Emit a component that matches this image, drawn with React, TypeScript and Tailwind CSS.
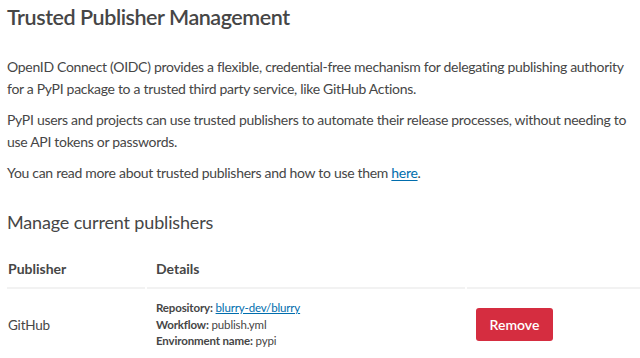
import React from "react";

export default function App() {
  return (
    <div
      className="w-[640px] h-[358px] overflow-hidden bg-white text-[#464646] pl-[7px]"
      style={{ fontFamily: "Lato, 'Noto Sans', sans-serif" }}
    >
      <h1 className="text-[21.5px] font-semibold leading-[30px] pt-[2px] tracking-[-0.45px] text-[#464646]">
        Trusted Publisher Management
      </h1>
      <div className="text-[14px] tracking-[-0.3px] leading-[22px] whitespace-nowrap">
        <p className="mt-[24px]">
          OpenID Connect (OIDC) provides a flexible, credential-free mechanism for delegating publishing authority
          <br />
          for a PyPI package to a trusted third party service, like GitHub Actions.
        </p>
        <p className="mt-[9px]">
          PyPI users and projects can use trusted publishers to automate their release processes, without needing to
          <br />
          use API tokens or passwords.
        </p>
        <p className="mt-[9px]">
          You can read more about trusted publishers and how to use them{" "}
          <a className="text-[#006dad] underline underline-offset-2">here</a>.
        </p>
      </div>
      <h2 className="mt-[25px] text-[18px] leading-[26px] tracking-[-0.15px] text-[#464646]">
        Manage current publishers
      </h2>
      <div className="mt-[23px] grid grid-cols-[138px_318px_1fr] gap-x-[2px] items-center">
        <div className="self-stretch border-b-2 border-[#f2f2f2] pb-[9px] pt-[2px] pl-[1px] text-[14px] font-bold leading-[18px]">
          Publisher
        </div>
        <div className="self-stretch border-b-2 border-[#f2f2f2] pb-[9px] pt-[2px] pl-[9px] text-[14px] font-bold leading-[18px]">
          Details
        </div>
        <div className="self-stretch border-b-2 border-[#f2f2f2] pb-[9px] pt-[2px]" />
        <div className="text-[13.5px] tracking-[-0.2px] pl-[1px]">GitHub</div>
        <div className="pl-[9px] py-[11px] text-[11.5px] leading-[16.5px] tracking-[-0.15px]">
          <div>
            <span className="font-bold">Repository:</span>{" "}
            <a className="text-[#006dad] underline">blurry-dev/blurry</a>
          </div>
          <div>
            <span className="font-bold">Workflow:</span> publish.yml
          </div>
          <div>
            <span className="font-bold">Environment name:</span> pypi
          </div>
        </div>
        <div className="flex items-center pl-[9px]">
          <button className="h-[33px] w-[77px] rounded-[3px] bg-[#d52d40] text-white text-[14px] font-semibold">
            Remove
          </button>
        </div>
      </div>
    </div>
  );
}
